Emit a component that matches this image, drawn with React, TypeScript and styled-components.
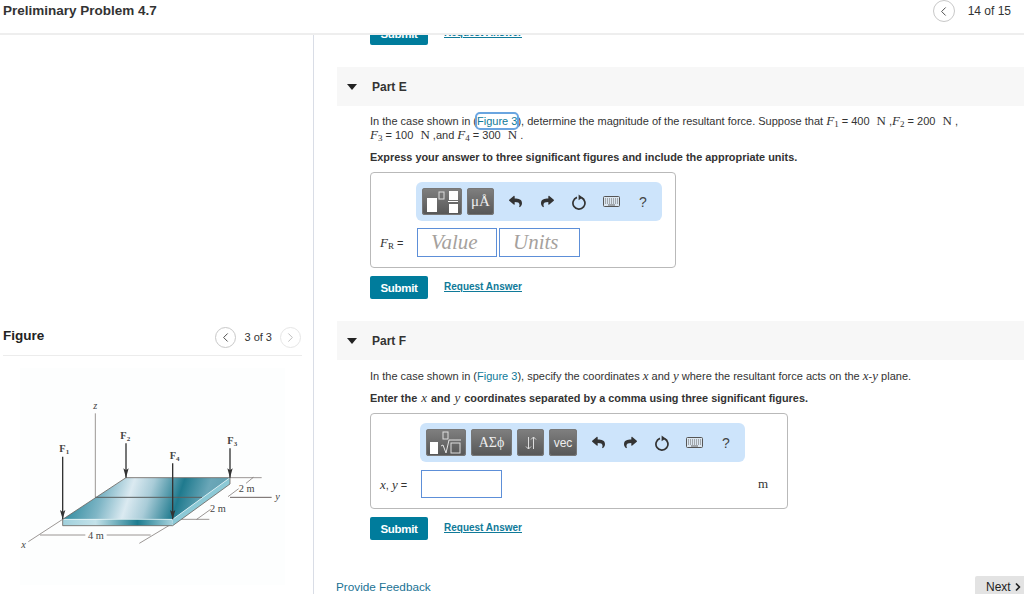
import React from "react";
import styled, { createGlobalStyle } from "styled-components";
import { ChevronLeft, ChevronRight } from "lucide-react";
import { FaReply, FaShare } from "react-icons/fa";

const Global = createGlobalStyle`
  html, body { margin: 0; padding: 0; background: #fff; height: 594px; overflow: hidden; }
  body { font-family: "Liberation Sans", Arial, sans-serif; color: #222; }
  * { box-sizing: border-box; }
`;

const Page = styled.div`width: 1024px; height: 594px; display: flex; flex-direction: column; overflow: hidden;`;
const TopBar = styled.header`
  height: 35px; flex: none; display: flex; justify-content: space-between; align-items: flex-start;
  border-bottom: 2px solid #eeeeee; padding-left: 3px; overflow: hidden;
`;
const PageTitle = styled.h1`margin: 2px 0 0; font-size: 13.5px; line-height: 17px; font-weight: 700; color: #333;`;
const Pager = styled.div`display: flex; align-items: center; flex: none; gap: 8px; color: #333; font-size: 11px; line-height: 21px;`;
const TopPager = styled(Pager)`margin-right: -22px; gap: 13px; font-size: 12px; line-height: 22px;`;
const Circle = styled.span<{ $dim?: boolean; $size: number }>`
  width: ${p => p.$size}px; height: ${p => p.$size}px; border-radius: 50%; flex: none; display: flex; align-items: center; justify-content: center;
  border: 1px solid ${p => (p.$dim ? "#e6e6e6" : "#c8c8c8")}; color: ${p => (p.$dim ? "#bbb" : "#444")};
`;
const Body = styled.div`flex: 1; display: flex; min-height: 0;`;
const LeftPane = styled.aside`width: 314px; flex: none; border-right: 1px solid #d9dde6; padding-top: 292px;`;
const FigureHead = styled.div`
  margin-left: 3px; width: 299px; height: 29px; display: flex; justify-content: space-between; align-items: flex-start;
  border-bottom: 1px solid #ececec; padding-right: 1px;
`;
const FigureTitle = styled.h2`margin: 0; font-size: 13.5px; line-height: 17px; font-weight: 700; color: #222;`;
const FigureArt = styled.svg`display: block; margin-top: 4px;`;
const Main = styled.main`flex: 1; min-width: 0; overflow: hidden; padding-left: 23px;`;
const Scroll = styled.div`margin-top: -13px;`;
const Indented = styled.div`padding-left: 33px;`;
const ActionRow = styled.div<{ $top?: number }>`display: flex; align-items: center; gap: 16px; height: 23px; margin-top: ${p => p.$top ?? 0}px;`;
const SubmitButton = styled.button`
  width: 58px; height: 23px; padding: 0; border: none; border-radius: 2px; background: #007c9c; color: #fff;
  font: 700 11.5px "Liberation Sans", Arial, sans-serif; letter-spacing: -0.3px;
`;
const RequestLink = styled.a`color: #107a99; font-size: 10px; font-weight: 700; text-decoration: underline; margin-top: -2px;`;
const PartHeader = styled.div`
  margin-top: 22px; height: 39px; background: #f7f7f7; display: flex; align-items: center; padding-left: 10px;
  font-size: 12px; font-weight: 700; color: #333;
`;
const Caret = styled.span`
  width: 0; height: 0; border-left: 5px solid transparent; border-right: 5px solid transparent; border-top: 6px solid #222;
  margin-right: 15px;
`;
const Prose = styled.p<{ $top: number }>`margin: ${p => p.$top}px 0 0; font-size: 11px; line-height: 14px; color: #333; width: 640px;`;
const Strong = styled.p`margin: 8px 0 0; font-size: 10.9px; line-height: 14px; font-weight: 700; color: #333;`;
const FigureLink = styled.a<{ $focus?: boolean }>`
  color: #107a99;
  ${p => p.$focus ? "outline: 2px solid #6aa5e0; outline-offset: 0; border-radius: 3px; padding: 1px 0;" : ""}
`;
const MathVar = styled.span`
  font: italic 13px/1 "Liberation Serif", "DejaVu Serif", serif;
  ${Strong} & { margin: 0 1px; }
`;
const MathSub = styled.sub`font: 9px/0 "Liberation Serif", serif; vertical-align: -2px;`;
const MathUnit = styled.span`font: 13px/1 "Liberation Serif", serif; margin-left: 4px;`;
const AnswerBox = styled.div<{ $width: number }>`
  margin-top: 8px; width: ${p => p.$width}px; height: 96px; border: 1px solid #b9b9b9; border-radius: 4px; padding: 9px 0 0;
`;
const Toolbar = styled.div<{ $left: number }>`
  margin-left: ${p => p.$left}px; width: fit-content; height: 39px; display: flex; align-items: center;
  padding: 0 3px 0 6px; background: #cde4fb; border-radius: 6px;
`;
const ToolButton = styled.span<{ $w: number }>`
  width: ${p => p.$w}px; height: 27px; margin-right: 5px; flex: none; border-radius: 3px; display: flex; align-items: center; justify-content: center;
  background: linear-gradient(#808080, #565656); color: #e8e8e8; box-shadow: inset 0 0 0 1px #777;
`;
const ToolGlyph = styled.span<{ $serif?: boolean; $size: number }>`
  font: ${p => p.$size}px ${p => (p.$serif ? '"Liberation Serif", serif' : '"Liberation Sans", sans-serif')};
  color: #eee; line-height: 1;
`;
const Slot = styled.span`width: 32px; height: 27px; flex: none; display: flex; align-items: center; justify-content: center; color: #444; font-size: 14px;`;
const AnswerRow = styled.div<{ $top: number }>`margin-top: ${p => p.$top}px; display: flex; align-items: center; gap: 2px;`;
const Label = styled.span<{ $w: number }>`width: ${p => p.$w}px; flex: none; padding-left: 9px; font-size: 11px; color: #333; white-space: nowrap;`;
const Field = styled.input<{ $h: number; $w: number }>`
  width: ${p => p.$w}px; height: ${p => p.$h}px; border: 1px solid #5d8fd8; background: #fff; padding: 0 0 0 13px; outline: none; flex: none;
  font: italic 21px "Liberation Serif", serif;
  &::placeholder { color: #a5a19d; opacity: 1; }
`;
const UnitText = styled.span`margin-left: auto; padding-right: 19px; font: 13px "Liberation Serif", serif; color: #333;`;
const Footer = styled.div`margin-top: 36px; height: 18px; display: flex; justify-content: space-between; align-items: flex-end; margin-left: -1px;`;
const FeedbackLink = styled.a`color: #1a7294; font-size: 11.75px; line-height: 14px;`;
const NextButton = styled.span`
  width: 49px; height: 18px; background: #e3e3e3; border-radius: 2px 0 0 0; display: flex; align-items: center; padding: 3px 0 0 11px;
  font-size: 12px; color: #222; gap: 1px;
`;

const Undo = () => <FaReply size={13} color="#333" />;
const Redo = () => <FaShare size={13} color="#333" />;
const Reset = () => (
  <svg width="16" height="16" viewBox="0 0 16 16" fill="none">
    <path d="M6 3.4A6 6 0 1 0 10.4 3.6" stroke="#333" strokeWidth="1.7" />
    <path d="M7.6 0.6 L11.6 3.5 L7.6 6.2Z" fill="#333" />
  </svg>
);
const Keyboard = () => (
  <svg width="17" height="11" viewBox="0 0 17 11">
    <rect x="0.5" y="0.5" width="16" height="10" fill="#dbe6f0" stroke="#555" rx="1" />
    <path d="M2 3h13M2 5h13M2 7h13" stroke="#666" strokeWidth="1" strokeDasharray="1 1" />
    <path d="M5 9h7" stroke="#666" />
  </svg>
);
const FractionIcon = () => (
  <svg width="32" height="23" viewBox="0 0 32 23">
    <rect x="1" y="8" width="10" height="14" fill="#fff" />
    <rect x="13" y="2" width="5" height="7" fill="none" stroke="#ddd" />
    <rect x="23" y="1" width="9" height="9" fill="#fff" />
    <rect x="22" y="11" width="10" height="1" fill="#fff" />
    <rect x="23" y="14" width="9" height="9" fill="#fff" />
  </svg>
);
const RadicalIcon = () => (
  <svg width="34" height="24" viewBox="0 0 34 24">
    <rect x="1" y="11" width="8" height="12" fill="#fff" />
    <rect x="14" y="1" width="5" height="7" fill="none" stroke="#ddd" />
    <path d="M12 15l2-1 3 8 3-13h12" fill="none" stroke="#e4e4e4" />
    <rect x="22" y="12" width="9" height="10" fill="none" stroke="#ddd" />
  </svg>
);
const ArrowsIcon = () => (
  <svg width="12" height="14" viewBox="0 0 12 14" fill="none" stroke="#ddd">
    <path d="M3.5 1v12M1 10.5l2.5 2.5 2.5-2.5M8.5 13V1M6 3.5L8.5 1 11 3.5" />
  </svg>
);

const Plate = () => (
  <FigureArt width="310" height="234" viewBox="0 0 930 702" aria-label="Plate with four forces">
    <defs>
      <linearGradient id="top" x1="230" y1="340" x2="680" y2="490" gradientUnits="userSpaceOnUse">
        <stop offset="0" stopColor="#2f8a9e" />
        <stop offset="0.2" stopColor="#7fb6c6" />
        <stop offset="0.36" stopColor="#dbeaf1" />
        <stop offset="0.48" stopColor="#a9ccd8" />
        <stop offset="0.66" stopColor="#1f7a8e" />
        <stop offset="0.82" stopColor="#6ba7b8" />
        <stop offset="1" stopColor="#5c9cad" />
      </linearGradient>
      <linearGradient id="front" x1="188" y1="0" x2="518" y2="0" gradientUnits="userSpaceOnUse">
        <stop offset="0" stopColor="#9fd0dc" />
        <stop offset="0.3" stopColor="#c4e2ea" />
        <stop offset="0.68" stopColor="#1d7c90" />
        <stop offset="1" stopColor="#a7d3de" />
      </linearGradient>
    </defs>
    <rect x="60" y="24" width="795" height="650" fill="#fdfefe" />
    <g stroke="#6a625f" strokeWidth="2" fill="none">
      <path d="M286 160V412" />
      <path d="M85 545L188 478" />
      <path d="M120 525H256M320 525H452" />
      <path d="M418 550L518 490" />
      <path d="M518 478H628" />
      <path d="M690 353H785" />
      <path d="M590 478L632 448M684 410L716 386M738 370L760 352" />
      <path d="M690 412H815" strokeWidth="3" />
    </g>
    <polygon points="188,478 378,353 690,353 518,478" fill="url(#top)" />
    <polygon points="188,478 518,478 518,497 188,497" fill="url(#front)" />
    <polygon points="518,478 690,353 690,372 518,497" fill="#8cc9d6" />
    <path d="M188 478H518L690 353" stroke="#f2fafc" strokeWidth="2" fill="none" />
    <path d="M188 497H518L690 372V353H378L188 478V497" stroke="#6d6763" strokeWidth="2.5" fill="none" />
    <path d="M286 412H606" stroke="#5b5f60" strokeWidth="3" fill="none" />
    <g stroke="#333" strokeWidth="4" fill="none">
      <path d="M188 290V478" />
      <path d="M378 250V353" />
      <path d="M690 265V353" />
      <path d="M518 310V478" />
    </g>
    <g fill="#333">
      <path d="M180 450L188 478L196 450L188 456Z" />
      <path d="M370 325L378 353L386 325L378 331Z" />
      <path d="M682 325L690 353L698 325L690 331Z" />
      <path d="M510 450L518 478L526 450L518 456Z" />
    </g>
    <g fontFamily="'Liberation Serif', serif" fill="#444" fontSize="31">
      <text x="178" y="276" fontWeight="700">F<tspan fontSize="21" dy="6">1</tspan></text>
      <text x="361" y="237" fontWeight="700">F<tspan fontSize="21" dy="6">2</tspan></text>
      <text x="682" y="253" fontWeight="700">F<tspan fontSize="21" dy="6">3</tspan></text>
      <text x="509" y="296" fontWeight="700">F<tspan fontSize="21" dy="6">4</tspan></text>
      <text x="280" y="148" fontStyle="italic">z</text>
      <text x="64" y="565" fontStyle="italic">x</text>
      <text x="826" y="421" fontStyle="italic">y</text>
      <text x="264" y="537">4 m</text>
      <text x="716" y="396">2 m</text>
      <text x="630" y="455">2 m</text>
    </g>
  </FigureArt>
);

const F = ({ n }: { n: number }) => <MathVar>F<MathSub>{n}</MathSub></MathVar>;
const Newton = () => <MathUnit>N</MathUnit>;

export default function App() {
  return (
    <Page>
      <Global />
      <TopBar>
        <PageTitle>Preliminary Problem 4.7</PageTitle>
        <TopPager>
          <Circle $size={22}><ChevronLeft size={15} strokeWidth={1.5} /></Circle>
          <span>14 of 15</span>
          <Circle $size={22} />
        </TopPager>
      </TopBar>
      <Body>
        <LeftPane>
          <FigureHead>
            <FigureTitle>Figure</FigureTitle>
            <Pager>
              <Circle $size={21}><ChevronLeft size={15} strokeWidth={1.5} /></Circle>
              <span>3 of 3</span>
              <Circle $size={21} $dim><ChevronRight size={15} strokeWidth={1.5} /></Circle>
            </Pager>
          </FigureHead>
          <Plate />
        </LeftPane>
        <Main>
          <Scroll>
            <Indented>
              <ActionRow>
                <SubmitButton>Submit</SubmitButton>
                <RequestLink>Request Answer</RequestLink>
              </ActionRow>
            </Indented>

            <PartHeader><Caret />Part E</PartHeader>
            <Indented>
              <Prose $top={8}>
                In the case shown in (<FigureLink $focus>Figure 3</FigureLink>), determine the magnitude of the resultant force. Suppose that <F n={1} /> = 400 <Newton /> ,<F n={2} /> = 200 <Newton /> ,<br />
                <F n={3} /> = 100 <Newton /> ,and <F n={4} /> = 300 <Newton /> .
              </Prose>
              <Strong>Express your answer to three significant figures and include the appropriate units.</Strong>
              <AnswerBox $width={306}>
                <Toolbar $left={45}>
                  <ToolButton $w={40}><FractionIcon /></ToolButton>
                  <ToolButton $w={27}><ToolGlyph $serif $size={15}>μÅ</ToolGlyph></ToolButton>
                  <Slot><Undo /></Slot>
                  <Slot><Redo /></Slot>
                  <Slot><Reset /></Slot>
                  <Slot><Keyboard /></Slot>
                  <Slot>?</Slot>
                </Toolbar>
                <AnswerRow $top={7}>
                  <Label $w={44}><MathVar>F<MathSub>R</MathSub></MathVar> =</Label>
                  <Field $h={29} $w={80} readOnly placeholder="Value" />
                  <Field $h={29} $w={81} readOnly placeholder="Units" />
                </AnswerRow>
              </AnswerBox>
              <ActionRow $top={8}>
                <SubmitButton>Submit</SubmitButton>
                <RequestLink>Request Answer</RequestLink>
              </ActionRow>
            </Indented>

            <PartHeader><Caret />Part F</PartHeader>
            <Indented>
              <Prose $top={9}>
                In the case shown in (<FigureLink>Figure 3</FigureLink>), specify the coordinates <MathVar>x</MathVar> and <MathVar>y</MathVar> where the resultant force acts on the <MathVar>x</MathVar>-<MathVar>y</MathVar> plane.
              </Prose>
              <Strong>Enter the <MathVar>x</MathVar> and <MathVar>y</MathVar> coordinates separated by a comma using three significant figures.</Strong>
              <AnswerBox $width={418}>
                <Toolbar $left={49}>
                  <ToolButton $w={40}><RadicalIcon /></ToolButton>
                  <ToolButton $w={41}><ToolGlyph $serif $size={14}>ΑΣϕ</ToolGlyph></ToolButton>
                  <ToolButton $w={27}><ArrowsIcon /></ToolButton>
                  <ToolButton $w={28}><ToolGlyph $size={12}>vec</ToolGlyph></ToolButton>
                  <Slot><Undo /></Slot>
                  <Slot><Redo /></Slot>
                  <Slot><Reset /></Slot>
                  <Slot><Keyboard /></Slot>
                  <Slot>?</Slot>
                </Toolbar>
                <AnswerRow $top={8}>
                  <Label $w={48}><MathVar>x</MathVar>, <MathVar>y</MathVar> =</Label>
                  <Field $h={28} $w={81} readOnly />
                  <UnitText>m</UnitText>
                </AnswerRow>
              </AnswerBox>
              <ActionRow $top={8}>
                <SubmitButton>Submit</SubmitButton>
                <RequestLink>Request Answer</RequestLink>
              </ActionRow>
            </Indented>

            <Footer>
              <FeedbackLink>Provide Feedback</FeedbackLink>
              <NextButton>Next<ChevronRight size={12} strokeWidth={3.5} /></NextButton>
            </Footer>
          </Scroll>
        </Main>
      </Body>
    </Page>
  );
}
